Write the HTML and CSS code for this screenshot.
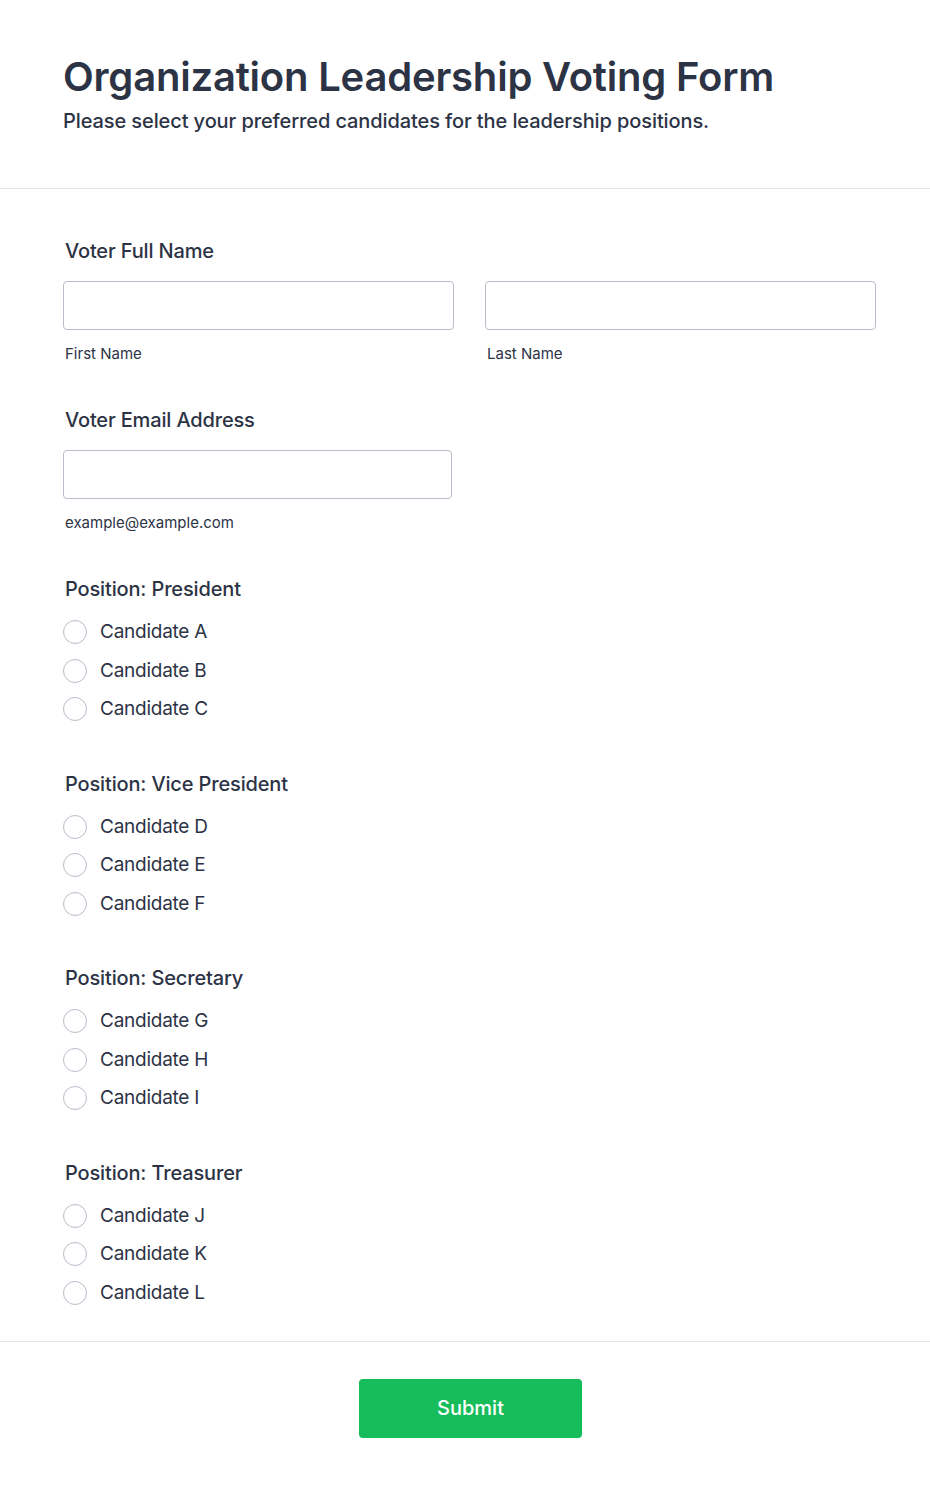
FILE: index.html
```html
<!DOCTYPE html>
<html lang="en">
<head>
    <meta charset="UTF-8">
    <meta name="viewport" content="width=device-width, initial-scale=1.0">
    <title>Organization Leadership Voting Form</title>
    <link rel="stylesheet" href="styles.css">
</head>
<body>

    <form class="form">
        <!-- Header -->
        <div class="form-header">
            <h1>Organization Leadership Voting Form</h1>
            <p>Please select your preferred candidates for the leadership positions.</p>
        </div>

        <div class="form-body">
            <div class="field">
                <label class="field-label">Voter Full Name</label>
                <div class="name-row">
                    <div class="sub-field">
                        <input type="text" class="text-input">
                        <span class="sub-label">First Name</span>
                    </div>
                    <div class="sub-field">
                        <input type="text" class="text-input">
                        <span class="sub-label">Last Name</span>
                    </div>
                </div>
            </div>

            <div class="field">
                <label class="field-label">Voter Email Address</label>
                <div class="sub-field email">
                    <input type="email" class="text-input">
                    <span class="sub-label">example@example.com</span>
                </div>
            </div>

            <div class="field radio-field">
                <label class="field-label">Position: President</label>
                <div class="options">
                    <label class="option"><input type="radio" name="president"><span>Candidate A</span></label>
                    <label class="option"><input type="radio" name="president"><span>Candidate B</span></label>
                    <label class="option"><input type="radio" name="president"><span>Candidate C</span></label>
                </div>
            </div>

            <div class="field radio-field">
                <label class="field-label">Position: Vice President</label>
                <div class="options">
                    <label class="option"><input type="radio" name="vice"><span>Candidate D</span></label>
                    <label class="option"><input type="radio" name="vice"><span>Candidate E</span></label>
                    <label class="option"><input type="radio" name="vice"><span>Candidate F</span></label>
                </div>
            </div>

            <div class="field radio-field">
                <label class="field-label">Position: Secretary</label>
                <div class="options">
                    <label class="option"><input type="radio" name="secretary"><span>Candidate G</span></label>
                    <label class="option"><input type="radio" name="secretary"><span>Candidate H</span></label>
                    <label class="option"><input type="radio" name="secretary"><span>Candidate I</span></label>
                </div>
            </div>

            <div class="field radio-field">
                <label class="field-label">Position: Treasurer</label>
                <div class="options">
                    <label class="option"><input type="radio" name="treasurer"><span>Candidate J</span></label>
                    <label class="option"><input type="radio" name="treasurer"><span>Candidate K</span></label>
                    <label class="option"><input type="radio" name="treasurer"><span>Candidate L</span></label>
                </div>
            </div>
        </div>

        <!-- Footer -->
        <div class="form-footer">
            <button type="button" class="submit">Submit</button>
        </div>
    </form>

</body>
</html>
```

FILE: styles.css
```css
body {
    font-family: Inter, "Noto Sans", sans-serif;
    background: #fff;
    color: #2c3345;
    margin: 0;
}

.form {
    width: 930px;
}

/* Header */
.form-header {
    padding: 52px 63px 52px;
    border-bottom: 1px solid #e3e5ea;
}

.form-header h1 {
    margin: 0;
    font-size: 40px;
    font-weight: 600;
    line-height: 50px;
    letter-spacing: -0.2px;
}

.form-header p {
    margin: 4px 0 0;
    font-size: 20px;
    font-weight: 500;
    line-height: 30px;
    letter-spacing: -0.1px;
}

.form-body {
    padding: 47px 54px 36px 63px;
}

.field {
    margin-bottom: 41px;
}

.field-label {
    display: block;
    font-size: 20px;
    font-weight: 500;
    line-height: 30px;
    letter-spacing: -0.15px;
    padding-left: 2px;
    margin-bottom: 15px;
}

.name-row {
    display: flex;
    gap: 31px;
}

.sub-field {
    flex: 1;
    display: flex;
    flex-direction: column;
}

.sub-field.email {
    width: 389px;
    flex: none;
}

.text-input {
    box-sizing: border-box;
    height: 49px;
    width: 100%;
    border: 1px solid #b8bdc9;
    border-radius: 4px;
    font: inherit;
    padding: 0 12px;
    margin: 0;
}

.sub-label {
    font-size: 15px;
    line-height: 20px;
    margin-top: 14px;
    padding-left: 2px;
}

/* Radios */
.radio-field {
    margin-bottom: 47.5px;
}

.radio-field:last-child {
    margin-bottom: 0;
}

.radio-field .field-label {
    margin-bottom: 16px;
}

.options {
    display: flex;
    flex-direction: column;
    gap: 14.5px;
}

.option {
    display: flex;
    align-items: center;
    gap: 13px;
    font-size: 19px;
    letter-spacing: -0.25px;
    line-height: 24px;
}

.option input {
    appearance: none;
    width: 24px;
    height: 24px;
    margin: 0;
    border: 1px solid #b8bdc9;
    border-radius: 50%;
    background: #fff;
}

/* Footer */
.form-footer {
    border-top: 1px solid #e3e5ea;
    padding: 37px 0 50px;
    display: flex;
    justify-content: center;
}

.submit {
    width: 223px;
    height: 59px;
    background: #18bd5b;
    color: #fff;
    border: none;
    border-radius: 4px;
    font-family: inherit;
    font-size: 20px;
    font-weight: 500;
    margin-left: 11px;
}
```
